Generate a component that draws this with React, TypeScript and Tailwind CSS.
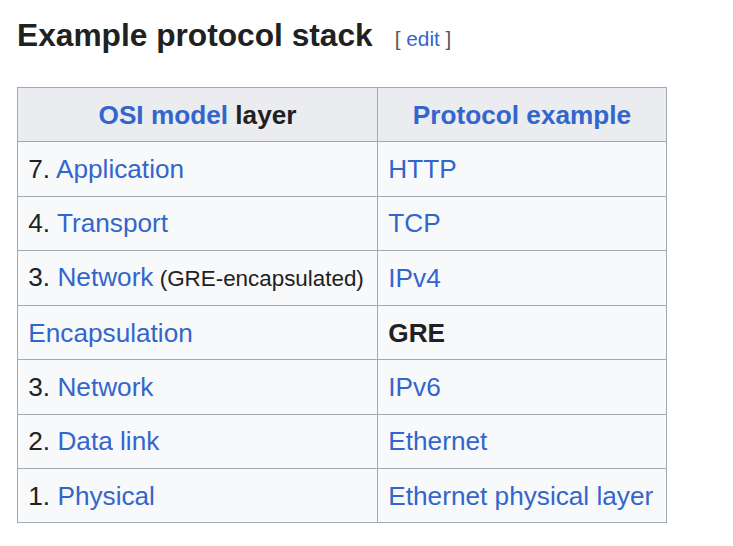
import React from "react";

const rows: { num?: string; layer: string; note?: string; proto: string; bold?: boolean }[] = [
  { num: "7.", layer: "Application", proto: "HTTP" },
  { num: "4.", layer: "Transport", proto: "TCP" },
  { num: "3.", layer: "Network", note: "(GRE-encapsulated)", proto: "IPv4" },
  { layer: "Encapsulation", proto: "GRE", bold: true },
  { num: "3.", layer: "Network", proto: "IPv6" },
  { num: "2.", layer: "Data link", proto: "Ethernet" },
  { num: "1.", layer: "Physical", proto: "Ethernet physical layer" },
];

const cell =
  "border border-[#a2a9b1] px-[10.3px] pt-[5.5px] pb-[4.5px] leading-[43.3px] align-middle whitespace-nowrap";

export default function App() {
  return (
    <div
      className="min-h-[546px] bg-white pl-[17px] text-[#202122]"
      style={{ fontFamily: '"Liberation Sans", Arial, sans-serif' }}
    >
      {/* section heading */}
      <div className="flex items-baseline pt-[15px]">
        <h3 className="text-[31.7px] leading-[40px] font-bold">Example protocol stack</h3>
        <span className="ml-[22px] text-[20.8px] text-[#54595d]">
          [ <a className="text-[#3366cc]">edit</a> ]
        </span>
      </div>

      <table className="mt-[32px] table-fixed border-collapse w-[649px] text-[26.2px]">
        <thead>
          <tr className="bg-[#eaecf0]">
            <th className={`${cell} w-[360px] text-center font-bold`}>
              <a className="text-[#3366cc]">OSI model</a> layer
            </th>
            <th className={`${cell} w-[289px] text-center font-bold text-[#3366cc]`}>
              Protocol example
            </th>
          </tr>
        </thead>
        <tbody>
          {rows.map((r, i) => (
            <tr key={i} className="bg-[#f8f9fa]">
              <td className={`${cell} text-left`}>
                {r.num && <>{r.num} </>}
                <a className="text-[#3366cc]">{r.layer}</a>
                {r.note && <span className="text-[22.4px]"> {r.note}</span>}
              </td>
              <td className={`${cell} text-left`}>
                {r.bold ? (
                  <b className="font-bold text-[#202122]">{r.proto}</b>
                ) : (
                  <a className="text-[#3366cc]">{r.proto}</a>
                )}
              </td>
            </tr>
          ))}
        </tbody>
      </table>
    </div>
  );
}
